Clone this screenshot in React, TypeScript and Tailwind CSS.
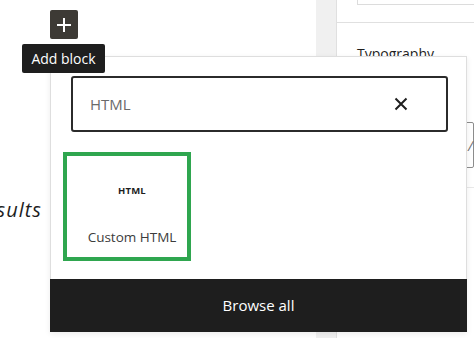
import React from "react";

export default function App() {
  return (
    <div className="relative w-[474px] h-[338px] overflow-hidden bg-white font-['Open_Sans','Noto_Sans',sans-serif] text-[#1e1e1e]">
      <div className="flex h-full">
        {/* editor canvas */}
        <main className="w-[316px] flex flex-col">
          <button className="mt-[10px] ml-[50px] w-[28px] h-[29px] bg-[#3d3a35] rounded-[2px] flex items-center justify-center">
            <svg width="16" height="16" viewBox="0 0 16 16">
              <path d="M8 1v14M1 8h14" stroke="#fff" strokeWidth="2" />
            </svg>
          </button>
          <div className="mt-[157px] w-[42px] overflow-hidden flex justify-end whitespace-nowrap">
            <span className="italic text-[20px] tracking-[1px] leading-[28px] text-[#1e1e1e]">Search results</span>
          </div>
        </main>
        <div className="w-[20px] bg-[#f0f0f0]" />
        {/* sidebar */}
        <aside className="flex-1 border-l border-[#e0e0e0] flex flex-col">
          <div className="h-[23px] border-b border-[#e0e0e0]">
            <div className="ml-[20px] h-[5px] border-l border-b border-[#dcdcdc]" />
          </div>
          <div className="pl-[20px] pt-[21px] text-[14px] leading-[20px] font-medium">Typography</div>
          <div className="ml-[20px] mt-[58px] h-[46px] border border-[#8c8c8c] rounded-[2px] flex items-center pl-[110px] italic text-[#757575] text-[14px]">/</div>
          <div className="mt-[19px] h-px bg-[#e8e8e8]" />
        </aside>
      </div>

      {/* inserter popover */}
      <div className="absolute left-[50px] top-[56px] w-[417px] h-[276px] bg-white border border-[#dedede] shadow-[0_2px_6px_rgba(0,0,0,0.08)] flex flex-col z-10">
        <div className="flex-1 flex flex-col pl-[20px] pt-[19px]">
          <div className="w-[377px] h-[56px] border-2 border-[#2b2b2b] rounded-[3px] flex items-center justify-between pl-[17px] pr-[38px]">
            <span className="text-[15px] text-[#6a6a6a]">HTML</span>
            <svg width="14" height="14" viewBox="0 0 14 14">
              <path d="M1.5 1.5l11 11M12.5 1.5l-11 11" stroke="#1e1e1e" strokeWidth="2" />
            </svg>
          </div>
          <div className="mt-[20px] -ml-[8px] w-[128px] h-[109px] border-4 border-[#2fa64f] flex flex-col items-center pl-[10px]">
            <div className="mt-[29px] text-[9.5px] font-bold leading-[12px] tracking-[0.2px]">HTML</div>
            <div className="mt-[30px] text-[13.5px] leading-[20px] text-[#3c3c3c]">Custom HTML</div>
          </div>
        </div>
        <div className="-mx-px -mb-px h-[53px] bg-[#1e1e1e] flex items-center justify-center text-white text-[15px]">
          Browse all
        </div>
      </div>

      {/* tooltip */}
      <div className="absolute left-[22px] top-[44px] w-[83px] h-[29px] bg-[#1e1e1e] rounded-[2px] flex items-center justify-center text-white text-[14px] z-20">
        Add block
      </div>
    </div>
  );
}
